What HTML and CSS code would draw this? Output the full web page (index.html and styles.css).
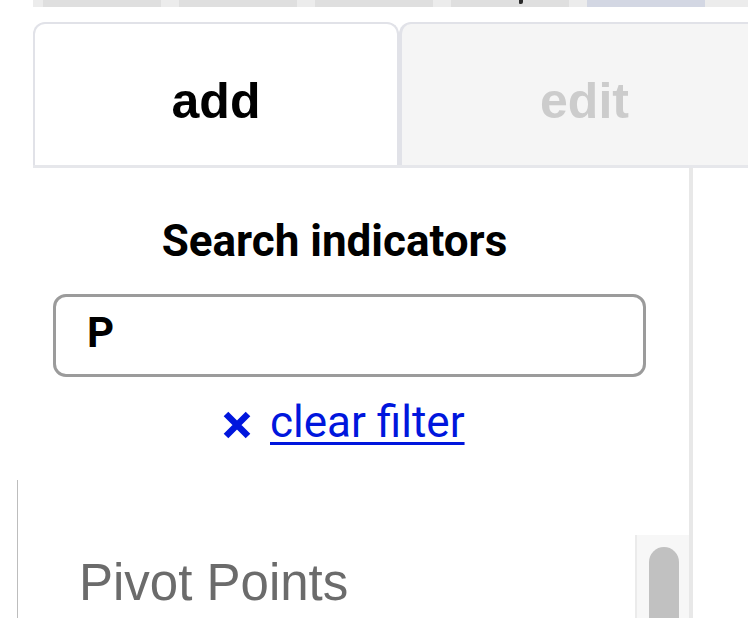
FILE: index.html
```html
<!DOCTYPE html>
<html>
<head>
<meta charset="utf-8">
<link rel="stylesheet" href="styles.css">
</head>
<body>
<div class="page">
  <div class="strip">
    <div class="seg light w10"></div>
    <div class="seg dark w118"></div>
    <div class="seg light w18"></div>
    <div class="seg dark w118"></div>
    <div class="seg light w18"></div>
    <div class="seg dark w118"></div>
    <div class="seg light w18"></div>
    <div class="seg dark w118 mark-host"><span class="mark"></span></div>
    <div class="seg light w18"></div>
    <div class="seg blue w118"></div>
    <div class="seg light w43"></div>
  </div>
  <div class="main">
    <div class="gutter">
      <div class="gutter-line"></div>
    </div>
    <div class="content">
      <div class="tabs">
        <div class="tab tab-active">add</div>
        <div class="tab tab-inactive">edit</div>
      </div>
      <div class="below">
        <div class="panel">
          <h2 class="title">Search indicators</h2>
          <div class="search">P</div>
          <div class="clear-row">
            <svg class="x-icon" width="30" height="28" viewBox="0 0 30 28"><path d="M4 3 L26 25 M26 3 L4 25" stroke="#0016dd" stroke-width="6.5" stroke-linecap="butt" fill="none"/></svg>
            <a class="clear-link" href="#">clear filter</a>
          </div>
          <div class="list">
            <div class="list-items">
              <div class="item">Pivot Points</div>
            </div>
            <div class="scroll-track"><div class="scroll-thumb"></div></div>
          </div>
        </div>
      </div>
    </div>
  </div>
</div>
</body>
</html>
```
FILE: styles.css
```css
html, body {
  margin: 0;
  padding: 0;
  background: #ffffff;
  overflow: hidden;
}
.page {
  width: 748px;
  height: 618px;
  overflow: hidden;
  background: #ffffff;
}
.strip {
  display: flex;
  height: 7px;
  margin-left: 33px;
}
.seg { height: 7px; flex: none; }
.light { background: #ececec; }
.dark { background: #dfdfdf; }
.blue { background: #d3d7e3; }
.w10 { width: 10px; }
.w18 { width: 18px; }
.w43 { width: 43px; }
.w118 { width: 118px; }
.mark-host { display: flex; padding-left: 68px; box-sizing: border-box; }
.mark {
  display: block;
  width: 4px;
  height: 4px;
  background: #2a2a2a;
  border-radius: 0 0 2px 1px;
}
.main {
  display: flex;
  margin-top: 15px;
}
.gutter {
  width: 33px;
  flex: none;
}
.gutter-line {
  margin-left: 17px;
  margin-top: 458px;
  width: 0;
  height: 200px;
  border-left: 1px solid #bdbdbd;
}
.content {
  width: 715px;
  flex: none;
  overflow: hidden;
}
.tabs {
  display: flex;
  width: 760px;
  border-bottom: 3px solid #e6e7eb;
}
.tab {
  flex: none;
  box-sizing: border-box;
  width: 366px;
  height: 143px;
  border: 2px solid #e1e2e8;
  border-bottom: none;
  border-radius: 12px 12px 0 0;
  text-align: center;
  font-family: "Liberation Sans", Arial, sans-serif;
  font-weight: bold;
  font-size: 50px;
  line-height: 56px;
  padding-top: 49px;
}
.tab-active {
  background: #ffffff;
  color: #000000;
}
.tab-inactive {
  background: #f5f5f5;
  color: #cccccc;
  border-left-width: 3px;
  width: 370px;
}
.below {
  display: flex;
}
.panel {
  width: 656px;
  flex: none;
  border-right: 4px solid #e8e8e8;
  height: 460px;
  font-family: Roboto, "Liberation Sans", sans-serif;
}
.title {
  margin: 47px 0 0 0;
  width: 603px;
  text-align: center;
  font-family: Roboto, sans-serif;
  font-weight: bold;
  font-size: 44px;
  line-height: 52px;
  color: #000000;
}
.search {
  margin: 27px 0 0 20px;
  box-sizing: border-box;
  width: 593px;
  height: 83px;
  border: 3px solid #9b9b9b;
  border-radius: 13px;
  padding: 11px 0 0 31px;
  font-family: Roboto, sans-serif;
  font-weight: bold;
  font-size: 42px;
  line-height: 50px;
  color: #000000;
}
.clear-row {
  margin: 20px 0 0 189px;
  display: flex;
  align-items: center;
  gap: 18px;
  height: 50px;
}
.x-icon {
  flex: none;
  margin-top: 6px;
}
.clear-link {
  font-family: Roboto, sans-serif;
  font-size: 44px;
  line-height: 50px;
  color: #0016dd;
  text-decoration: underline;
  text-decoration-thickness: 3px;
  text-underline-offset: 5px;
}
.list {
  display: flex;
  margin-top: 88px;
  height: 100px;
}
.list-items {
  width: 602px;
  flex: none;
}
.item {
  padding: 19px 0 0 46px;
  font-family: "Liberation Sans", Arial, sans-serif;
  font-size: 51px;
  line-height: 57px;
  color: #6b6b6b;
}
.scroll-track {
  width: 54px;
  flex: none;
  box-sizing: border-box;
  background: #f7f7f7;
  border-left: 2px solid #ebebeb;
  padding: 12px 0 0 12px;
}
.scroll-thumb {
  width: 30px;
  height: 120px;
  background: #c1c1c1;
  border-radius: 15px 15px 0 0;
}
```
